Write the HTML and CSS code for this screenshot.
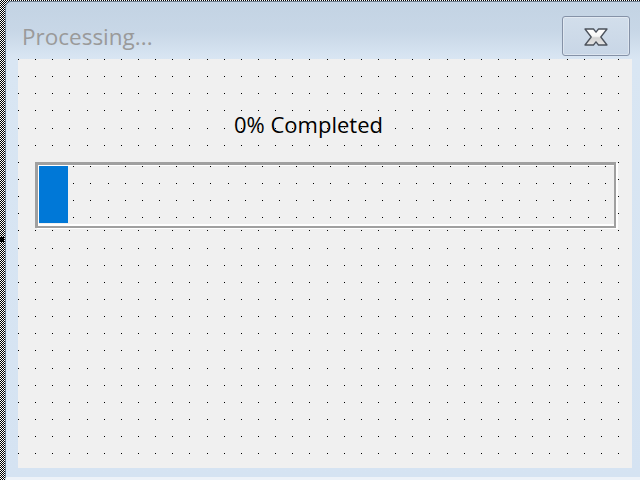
FILE: index.html
```html
<!DOCTYPE html>
<html>
<head>
<meta charset="utf-8">
<link rel="stylesheet" href="styles.css">
</head>
<body>
<div class="design">
  <div class="handle"></div>
  <div class="window">
    <div class="titlebar">
      <div class="title">Processing...</div>
      <div class="close">
        <svg width="24" height="18" viewBox="0 0 24 18">
          <defs>
            <linearGradient id="xg" x1="0" y1="0" x2="0" y2="1">
              <stop offset="0" stop-color="#ffffff"/>
              <stop offset="0.45" stop-color="#f6f6f6"/>
              <stop offset="0.55" stop-color="#d2d2d2"/>
              <stop offset="1" stop-color="#e6e6e6"/>
            </linearGradient>
          </defs>
          <path d="M1 1H9.5L12 4.2L14.5 1H23L16.8 9L23 17H14.5L12 13.8L9.5 17H1L7.2 9Z" fill="url(#xg)" stroke="#4b515b" stroke-width="1.3" stroke-linejoin="round"/>
        </svg>
      </div>
    </div>
    <div class="client">
      <div class="caption">0% Completed</div>
      <div class="frame">
        <div class="bar"></div>
      </div>
    </div>
  </div>
</div>
</body>
</html>
```
FILE: styles.css
```css
html, body {
  margin: 0;
  padding: 0;
}
body {
  width: 640px;
  height: 480px;
  overflow: hidden;
  background: #fff;
}
.design {
  position: relative;
  display: flex;
  height: 480px;
  box-sizing: border-box;
  padding: 1px 0 0 5px;
  background: repeating-conic-gradient(#000 0 25%, #fff 0 50%) 0 0 / 2px 2px;
}
.handle {
  position: absolute;
  left: 0;
  top: 237px;
  width: 4px;
  height: 5px;
  background: #000;
}
.window {
  flex: 1;
  display: flex;
  flex-direction: column;
  border-left: 1px solid #6f7f92;
  border-top: 1px solid #6f7f92;
  border-bottom: 3px solid #edf2f8;
  border-top-left-radius: 6px;
  background: linear-gradient(#c3d3e3 0, #c8d7e7 30px, #d9e6f3 57px, #d5e3f2 100%);
}
.titlebar {
  height: 57px;
  flex: none;
  display: flex;
  align-items: flex-start;
  padding: 0 10px 0 16px;
}
.title {
  font-family: "Open Sans", "Noto Sans", sans-serif;
  font-size: 22.5px;
  line-height: 30px;
  margin-top: 20px;
  color: #9a9a9a;
}
.close {
  margin-left: auto;
  margin-top: 14px;
  width: 68px;
  height: 40px;
  box-sizing: border-box;
  border: 1px solid #8592a7;
  border-radius: 3px;
  background: linear-gradient(#d2deeb, #c8d6e6);
  box-shadow: inset 0 0 0 1px rgba(255, 255, 255, 0.35);
  display: flex;
  justify-content: center;
  align-items: center;
  padding-top: 1px;
}
.close svg {
  display: block;
}
.client {
  height: 409px;
  flex: none;
  margin: 0 8px 0 12px;
  background-color: #f0f0f0;
  background-image: url("data:image/svg+xml,%3Csvg xmlns='http://www.w3.org/2000/svg' width='120' height='120'%3E%3Cg id='r'%3E%3Crect width='1' height='1'/%3E%3Crect x='17' width='1' height='1'/%3E%3Crect x='34' width='1' height='1'/%3E%3Crect x='51' width='1' height='1'/%3E%3Crect x='69' width='1' height='1'/%3E%3Crect x='86' width='1' height='1'/%3E%3Crect x='103' width='1' height='1'/%3E%3C/g%3E%3Cuse href='%23r' y='17'/%3E%3Cuse href='%23r' y='34'/%3E%3Cuse href='%23r' y='51'/%3E%3Cuse href='%23r' y='69'/%3E%3Cuse href='%23r' y='86'/%3E%3Cuse href='%23r' y='103'/%3E%3C/svg%3E");
  background-size: 120px 120px;
  background-position: 0 0;
  padding-top: 1px;
  box-sizing: border-box;
}
.caption {
  margin: 49px 0 0 216px;
  height: 53px;
  font-family: "Open Sans", "Noto Sans", sans-serif;
  font-size: 22px;
  line-height: 30px;
  color: #000;
}
.frame {
  margin-left: 17px;
  width: 581px;
  height: 66px;
  box-sizing: border-box;
  border-style: solid;
  border-color: #a0a0a0;
  border-width: 3px 2px 2px 3px;
  padding: 1px 0 3px 1px;
  box-shadow: 2px 1px 0 #fff, inset 1px 1px 0 #fff, inset 0 -2px 0 #fff;
  background-color: #f0f0f0;
  background-image: url("data:image/svg+xml,%3Csvg xmlns='http://www.w3.org/2000/svg' width='120' height='120'%3E%3Cg id='r'%3E%3Crect width='1' height='1'/%3E%3Crect x='17' width='1' height='1'/%3E%3Crect x='34' width='1' height='1'/%3E%3Crect x='51' width='1' height='1'/%3E%3Crect x='69' width='1' height='1'/%3E%3Crect x='86' width='1' height='1'/%3E%3Crect x='103' width='1' height='1'/%3E%3C/g%3E%3Cuse href='%23r' y='17'/%3E%3Cuse href='%23r' y='34'/%3E%3Cuse href='%23r' y='51'/%3E%3Cuse href='%23r' y='69'/%3E%3Cuse href='%23r' y='86'/%3E%3Cuse href='%23r' y='103'/%3E%3C/svg%3E");
  background-size: 120px 120px;
  background-origin: content-box;
  background-clip: content-box;
}
.bar {
  width: 29px;
  height: 57px;
  background: #0078d7;
}
```
